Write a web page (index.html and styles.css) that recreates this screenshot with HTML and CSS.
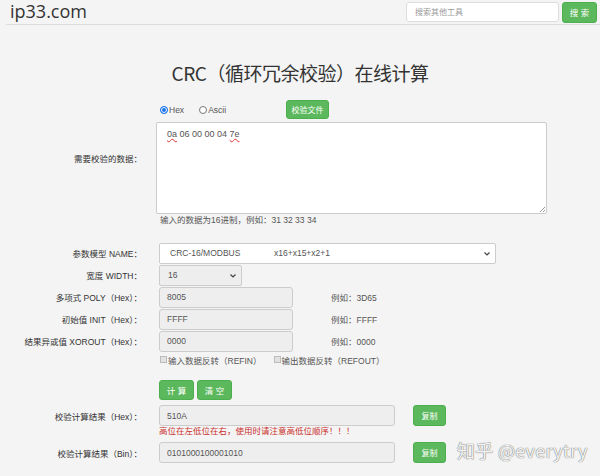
FILE: index.html
```html
<!DOCTYPE html>
<html lang="zh-CN">
<head>
    <meta charset="UTF-8">
    <title>CRC（循环冗余校验）在线计算</title>
    <link rel="stylesheet" href="styles.css">
</head>
<body>
    <div class="header">
        <div class="logo">ip33.com</div>
        <div class="search">
            <input class="search-input" type="text" placeholder="搜索其他工具">
            <span class="btn btn-search">搜 索</span>
        </div>
    </div>

    <h1 class="title">CRC（循环冗余校验）在线计算</h1>

    <div class="form">
        <div class="row row-radio">
            <div class="label"></div>
            <label class="radio-item"><span class="radio radio-on"></span>Hex</label>
            <label class="radio-item radio-ascii"><span class="radio"></span>Ascii</label>
            <span class="btn btn-file">校验文件</span>
        </div>

        <div class="row row-data">
            <div class="label label-data">需要校验的数据：</div>
            <div class="textarea"><span class="typo">0a</span> 06 00 00 04 <span class="typo">7e</span><span class="grip"></span></div>
        </div>
        <div class="row">
            <div class="label"></div>
            <div class="hint">输入的数据为16进制，例如：31 32 33 34</div>
        </div>

        <div class="row row-field row-first">
            <div class="label">参数模型 NAME：</div>
            <div class="select select-name">
                <span class="opt-name">CRC-16/MODBUS</span><span>x16+x15+x2+1</span>
                <svg class="chevron" width="6" height="4" viewBox="0 0 6 4"><path d="M0.5 0.5 L3 3 L5.5 0.5" fill="none" stroke="#444" stroke-width="1.2"/></svg>
            </div>
        </div>
        <div class="row row-field">
            <div class="label">宽度 WIDTH：</div>
            <div class="select select-width">
                <span>16</span>
                <svg class="chevron" width="6" height="4" viewBox="0 0 6 4"><path d="M0.5 0.5 L3 3 L5.5 0.5" fill="none" stroke="#444" stroke-width="1.2"/></svg>
            </div>
        </div>
        <div class="row row-field">
            <div class="label">多项式 POLY（Hex）：</div>
            <input class="input input-short" type="text" value="8005" readonly>
            <span class="example">例如：3D65</span>
        </div>
        <div class="row row-field">
            <div class="label">初始值 INIT（Hex）：</div>
            <input class="input input-short" type="text" value="FFFF" readonly>
            <span class="example">例如：FFFF</span>
        </div>
        <div class="row row-field">
            <div class="label">结果异或值 XOROUT（Hex）：</div>
            <input class="input input-short" type="text" value="0000" readonly>
            <span class="example">例如：0000</span>
        </div>

        <div class="row row-check">
            <div class="label"></div>
            <label class="check-item"><span class="check"></span>输入数据反转（REFIN）</label>
            <label class="check-item check-out"><span class="check"></span>输出数据反转（REFOUT）</label>
        </div>

        <div class="row row-buttons">
            <div class="label"></div>
            <span class="btn btn-action">计 算</span>
            <span class="btn btn-action btn-clear">清 空</span>
        </div>

        <div class="row row-result">
            <div class="label">校验计算结果（Hex）：</div>
            <input class="input input-result" type="text" value="510A" readonly>
            <span class="btn btn-copy">复制</span>
        </div>
        <div class="row">
            <div class="label"></div>
            <div class="warn">高位在左低位在右，使用时请注意高低位顺序！！！</div>
        </div>
        <div class="row row-result row-bin">
            <div class="label">校验计算结果（Bin）：</div>
            <input class="input input-result" type="text" value="0101000100001010" readonly>
            <span class="btn btn-copy">复制</span>
        </div>
    </div>

    <div class="watermark">知乎 @everytry</div>
</body>
</html>
```

FILE: styles.css
```css
body {
    margin: 0;
    background-color: #f4f4f4;
    font-family: "Liberation Sans", "Noto Sans CJK SC", sans-serif;
    font-size: 8.5px;
    color: #555;
    position: relative;
    height: 476px;
    overflow: hidden;
}
.header {
    display: flex;
    align-items: center;
    justify-content: space-between;
    height: 24px;
    margin-left: 6px;
    padding: 0 3px 0 4px;
    border-bottom: 1px solid #dcdcdc;
}
.logo {
    font-family: "Open Sans", sans-serif;
    font-size: 18px;
    color: #333;
    line-height: 24px;
    margin-top: -2px;
}
.search {
    display: flex;
    align-items: center;
    gap: 3px;
}
.search-input {
    width: 153px;
    height: 20px;
    box-sizing: border-box;
    border: 1px solid #ddd;
    border-radius: 3px;
    background-color: #fff;
    padding: 0 8px;
    font-family: inherit;
    font-size: 8px;
    outline: none;
}
.search-input::placeholder {
    color: #999;
}
.btn {
    display: inline-flex;
    align-items: center;
    justify-content: center;
    box-sizing: border-box;
    background-color: #5cb85c;
    border: 1px solid #4cae4c;
    border-radius: 3px;
    color: #fff;
    font-size: 8px;
}
.btn-search {
    width: 35px;
    height: 21px;
    font-size: 8.5px;
}
.title {
    margin: 36px 0 0;
    text-align: center;
    font-family: "Noto Sans CJK SC", sans-serif;
    font-weight: normal;
    font-size: 19px;
    line-height: 24px;
    color: #333;
    letter-spacing: -0.5px;
}
.form {
    margin-top: 15px;
}
.row {
    display: flex;
    align-items: center;
}
.label {
    flex: none;
    width: 142px;
    margin-right: 17px;
    text-align: right;
    color: #333;
}
.row-radio {
    height: 19px;
}
.radio-item {
    display: inline-flex;
    align-items: center;
    margin-left: 1px;
}
.radio-ascii {
    margin-left: 15px;
}
.radio {
    display: inline-block;
    width: 6px;
    height: 6px;
    border: 1px solid #777;
    border-radius: 50%;
    background-color: #fff;
    margin-right: 1px;
}
.radio-on {
    border-color: #1a73e8;
    background-color: #1a73e8;
    box-shadow: inset 0 0 0 1px #fff;
}
.btn-file {
    width: 43px;
    height: 19px;
    margin-left: 60px;
}
.row-data {
    align-items: flex-start;
    margin-top: 3px;
}
.label-data {
    padding-top: 30px;
}
.textarea {
    position: relative;
    margin-left: -3px;
    width: 391px;
    height: 92px;
    box-sizing: border-box;
    background-color: #fff;
    border: 1px solid #ccc;
    border-radius: 2px;
    padding: 6px 10px;
    font-size: 9px;
    color: #555;
}
.typo {
    text-decoration: underline wavy #d33;
    text-decoration-thickness: 0.8px;
    text-underline-offset: 1px;
}
.grip {
    position: absolute;
    right: 1px;
    bottom: 1px;
    width: 5px;
    height: 5px;
    background: linear-gradient(135deg, transparent 45%, #999 45%, #999 55%, transparent 55%, transparent 75%, #999 75%, #999 85%, transparent 85%);
}
.hint {
    line-height: 12px;
    margin-left: 1px;
}
.row-first {
    margin-top: 16px;
}
.row-field {
    height: 22px;
}
.select {
    position: relative;
    display: flex;
    align-items: center;
    height: 21px;
    box-sizing: border-box;
    border: 1px solid #ccc;
    border-radius: 2px;
    padding-left: 10px;
    color: #555;
}
.select-name {
    width: 337px;
    background-color: #fff;
}
.opt-name {
    width: 104px;
}
.select-width {
    width: 83px;
    background-color: #eee;
    padding-left: 8px;
}
.chevron {
    position: absolute;
    right: 5px;
    top: 8px;
}
.input {
    height: 21px;
    box-sizing: border-box;
    border: 1px solid #ccc;
    border-radius: 3px;
    background-color: #eee;
    padding: 0 7px;
    font-family: inherit;
    font-size: 8.5px;
    color: #555;
    outline: none;
}
.input-short {
    width: 134px;
}
.example {
    margin-left: 38px;
}
.row-check {
    height: 16px;
}
.check-item {
    display: inline-flex;
    align-items: center;
    margin-left: 1px;
}
.check-out {
    margin-left: 12px;
}
.check {
    display: inline-block;
    width: 5px;
    height: 5px;
    border: 1px solid #bbb;
    background-color: #e2e2e2;
    margin-right: 1px;
    margin-top: -2px;
}
.row-buttons {
    margin-top: 12px;
}
.btn-action {
    width: 35px;
    height: 20px;
    font-size: 8.5px;
}
.btn-clear {
    margin-left: 3px;
}
.row-result {
    margin-top: 5px;
}
.input-result {
    width: 236px;
}
.btn-copy {
    width: 33px;
    height: 21px;
    margin-left: 18px;
}
.warn {
    color: #c9302c;
    line-height: 11px;
}
.row-bin {
    margin-top: 5px;
}
.watermark {
    position: absolute;
    left: 457px;
    top: 437px;
    font-family: "Noto Sans CJK SC", sans-serif;
    font-size: 18px;
    color: #f2f2f2;
    text-shadow: 0 0 1px #777, 0 0 1px #777;
    letter-spacing: 0.3px;
}
```
